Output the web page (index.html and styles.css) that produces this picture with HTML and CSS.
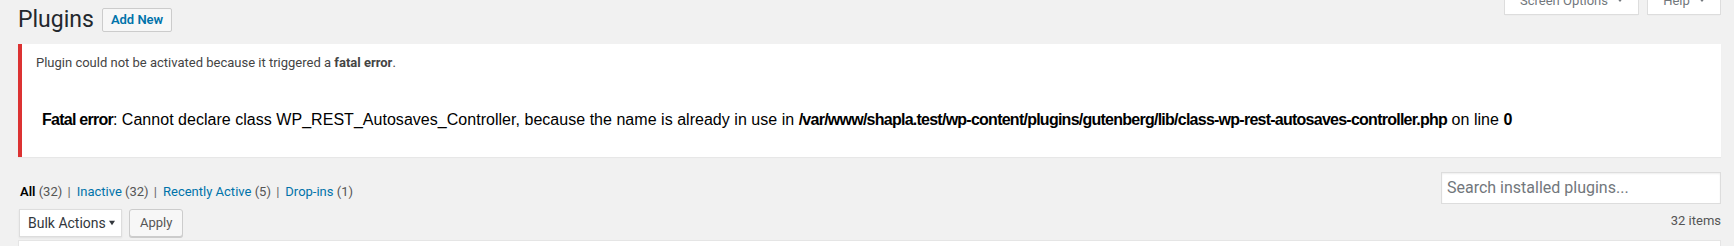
FILE: index.html
```html
<!DOCTYPE html>
<html lang="en">
<head>
    <meta charset="UTF-8">
    <meta name="viewport" content="width=device-width, initial-scale=1.0">
    <title>Plugins</title>
    <link rel="stylesheet" href="styles.css">
</head>
<body>

    <div class="wrap">
        <div class="page-head">
            <div class="title-group">
                <h1>Plugins</h1>
                <a href="#" class="page-title-action">Add New</a>
            </div>
            <div class="screen-meta-links">
                <button class="meta-tab">Screen Options
                    <svg class="arrow" width="8" height="6" viewBox="0 0 8 6"><path d="M0 0h8L4 5z"/></svg>
                </button>
                <button class="meta-tab">Help
                    <svg class="arrow" width="8" height="6" viewBox="0 0 8 6"><path d="M0 0h8L4 5z"/></svg>
                </button>
            </div>
        </div>

        <!-- Notice d'erreur -->
        <div class="notice notice-error">
            <p>Plugin could not be activated because it triggered a <strong>fatal error</strong>.</p>
            <div class="error-scrape"><br><b>Fatal error</b>: Cannot declare class WP_REST_Autosaves_Controller, because the name is already in use in <b>/var/www/shapla.test/wp-content/plugins/gutenberg/lib/class-wp-rest-autosaves-controller.php</b> on line <b>0</b></div>
        </div>

        <div class="filter-row">
            <ul class="subsubsub">
                <li><a href="#" class="current">All <span class="count">(32)</span></a> |</li>
                <li><a href="#">Inactive <span class="count">(32)</span></a> |</li>
                <li><a href="#">Recently Active <span class="count">(5)</span></a> |</li>
                <li><a href="#">Drop-ins <span class="count">(1)</span></a></li>
            </ul>
            <input type="search" class="search-input" placeholder="Search installed plugins...">
        </div>

        <div class="tablenav">
            <div class="actions">
                <div class="bulk-select">Bulk Actions
                    <svg class="arrow" width="8" height="6" viewBox="0 0 8 6"><path d="M0 0h8L4 6z"/></svg>
                </div>
                <button class="button">Apply</button>
            </div>
            <span class="num-items">32 items</span>
        </div>

        <div class="plugins-table"></div>
    </div>

</body>
</html>
```

FILE: styles.css
```css
body {
    margin: 0;
    background: #f1f1f1;
    font-family: Roboto, "Noto Sans", sans-serif;
    font-size: 13px;
    color: #444;
    overflow: hidden;
}

a {
    color: #0073aa;
    text-decoration: none;
}

.wrap {
    padding: 0 13px 0 18px;
}

/* en-tete */
.page-head {
    display: flex;
    justify-content: space-between;
    align-items: flex-start;
}

.title-group {
    display: flex;
    align-items: center;
    gap: 8px;
    padding: 5px 0 9px;
}

h1 {
    margin: 0;
    font-size: 23px;
    font-weight: 400;
    line-height: 1.3;
    color: #23282d;
}

.page-title-action {
    display: inline-block;
    padding: 4px 8px;
    line-height: 14px;
    border: 1px solid #ccc;
    border-radius: 2px;
    background: #f7f7f7;
    font-size: 13px;
    font-weight: 600;
}

.screen-meta-links {
    display: flex;
    gap: 8px;
    margin-top: -13px;
}

.meta-tab {
    box-sizing: border-box;
    height: 28px;
    padding: 3px 0;
    border: 1px solid #ddd;
    border-top: none;
    background: #fff;
    box-shadow: 0 1px 1px -1px rgba(0, 0, 0, 0.1);
    font-family: inherit;
    font-size: 13px;
    line-height: 22px;
    color: #72777c;
    white-space: nowrap;
    display: flex;
    align-items: center;
    justify-content: center;
    gap: 9px;
}

.meta-tab:first-child {
    width: 135px;
}

.meta-tab:last-child {
    width: 74px;
}

.arrow {
    fill: currentColor;
}

.meta-tab .arrow {
    width: 6px;
    height: 5px;
}

/* notice */
.notice {
    background: #fff;
    border-left: 4px solid #dc3232;
    box-shadow: 0 1px 1px rgba(0, 0, 0, 0.04);
    padding: 1px 12px 1px;
}

.notice p {
    margin: 6.5px 0;
    padding: 2px;
    font-size: 13px;
    line-height: 1.5;
}

.error-scrape {
    height: 54px;
    margin: 10px 0 1px;
    padding: 8px;
    font-family: "Liberation Sans", Arial, sans-serif;
    font-size: 16px;
    letter-spacing: 0.03px;
    color: #000;
}

.error-scrape b {
    letter-spacing: -0.75px;
}

/* filtres */
.filter-row {
    display: flex;
    justify-content: space-between;
    align-items: flex-start;
    margin-top: 15px;
}

.subsubsub {
    display: flex;
    gap: 4px;
    list-style: none;
    margin: 10px 0 0;
    padding: 0 0 0 2px;
    line-height: 20px;
    color: #666;
}

.subsubsub a {
    padding: 0 2px;
}

.subsubsub a.current {
    color: #000;
    font-weight: 600;
    padding-left: 0;
}

.subsubsub .count {
    color: #555;
    font-weight: 400;
}

.search-input {
    box-sizing: border-box;
    width: 280px;
    height: 32px;
    margin: 0;
    padding: 3px 5px;
    border: 1px solid #ddd;
    box-shadow: inset 0 1px 2px rgba(0, 0, 0, 0.07);
    font-family: inherit;
    font-size: 16px;
    color: #32373c;
}

.search-input::placeholder {
    color: #72777c;
}

/* tablenav */
.tablenav {
    display: flex;
    justify-content: space-between;
    align-items: flex-start;
    margin-top: 5px;
    height: 31px;
}

.actions {
    display: flex;
    gap: 7px;
    padding-left: 1px;
}

.bulk-select {
    box-sizing: border-box;
    width: 103px;
    height: 28px;
    display: flex;
    align-items: center;
    justify-content: space-between;
    padding: 0 6px 0 8px;
    background: #fff;
    border: 1px solid #ddd;
    box-shadow: 0 1px 2px rgba(0, 0, 0, 0.07);
    font-size: 14px;
    color: #32373c;
}

.bulk-select .arrow {
    width: 6px;
    height: 6px;
}

.button {
    box-sizing: border-box;
    height: 28px;
    padding: 0 10px 1px;
    border: 1px solid #ccc;
    border-radius: 3px;
    background: #f7f7f7;
    box-shadow: 0 1px 0 #ccc;
    font-family: inherit;
    font-size: 13px;
    color: #555;
    width: 54px;
}

.num-items {
    line-height: 24px;
    color: #555;
}

.plugins-table {
    height: 40px;
    background: #fff;
    border: 1px solid #e5e5e5;
}
```
